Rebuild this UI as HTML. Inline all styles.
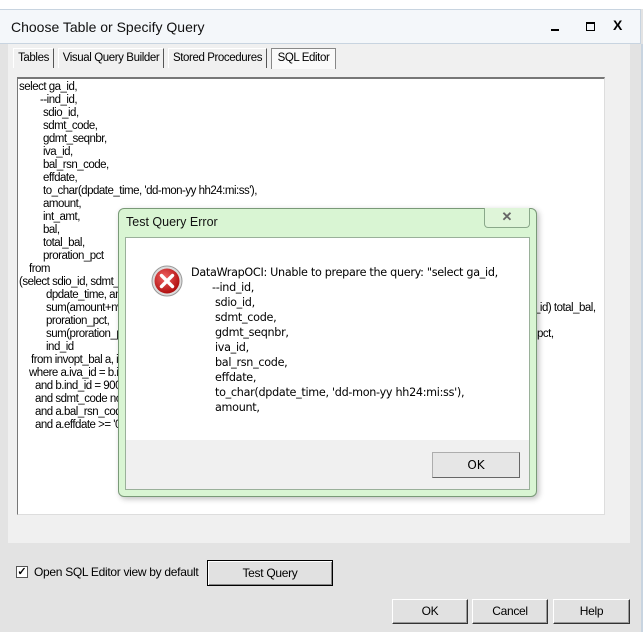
<!DOCTYPE html>
<html><head><meta charset="utf-8"><style>
*{margin:0;padding:0;box-sizing:border-box}
body{width:643px;height:632px;position:relative;background:#e3e3e3;overflow:hidden;font-family:"Liberation Sans",sans-serif}
.a{position:absolute;white-space:nowrap}
.ed{font-size:11.5px;letter-spacing:-0.5px;color:#000;line-height:13px}
.btn{position:absolute;background:#e1e1e1;border:1px solid #fff;border-right-color:#333;border-bottom-color:#333;box-shadow:inset -1px -1px 0 #999;font-size:12px;letter-spacing:-0.3px;text-align:center}
.tab{position:absolute;top:48px;height:20px;border:1px solid #fff;border-right-color:#555;border-bottom:none;background:#f0f0f0;font-size:11.5px;letter-spacing:-0.4px;line-height:18px;text-align:center}
.dt{font-family:"DejaVu Sans",sans-serif;font-size:11.2px;letter-spacing:-0.3px;line-height:15px;color:#000}
</style></head><body>
<div class="a" style="left:0;top:0;width:643px;height:9px;background:#fff"></div>
<div class="a" style="left:0;top:9px;width:641px;height:35px;background:#f4f7fa;border-top:1px solid #c8d4e0;border-bottom:1px solid #c8d4e0;border-right:1px solid #c8d4e0"></div>
<div class="a" style="left:11px;top:19px;font-size:14px;color:#111">Choose Table or Specify Query</div>
<div class="a" style="left:551px;top:29px;width:8px;height:2px;background:#000"></div>
<div class="a" style="left:586px;top:22px;width:9px;height:9px;border:1px solid #000;border-top-width:2px"></div>
<div class="a" style="left:613px;top:17px;font-size:14px;font-weight:bold">X</div>
<div class="a" style="left:641px;top:44px;width:2px;height:588px;background:#c8d4e0"></div>
<div class="a" style="left:8px;top:44px;width:622px;height:499px;background:#f0f0f0"></div>
<div class="tab" style="left:13px;width:41px">Tables</div>
<div class="tab" style="left:58px;width:106px">Visual Query Builder</div>
<div class="tab" style="left:168px;width:99px">Stored Procedures</div>
<div class="tab" style="left:271px;width:65px;background:#fafafa;border:1px solid #888;border-bottom:none;top:48px;height:21px">SQL Editor</div>
<div class="a" style="left:17px;top:77px;width:588px;height:438px;background:#fff;border-top:2px solid #777;border-left:1px solid #777;border-right:1px solid #ddd;border-bottom:1px solid #ddd"></div>
<div class="a ed" style="left:19px;top:81px">select ga_id,</div>
<div class="a ed" style="left:40px;top:94px">--ind_id,</div>
<div class="a ed" style="left:43px;top:107px">sdio_id,</div>
<div class="a ed" style="left:43px;top:120px">sdmt_code,</div>
<div class="a ed" style="left:43px;top:133px">gdmt_seqnbr,</div>
<div class="a ed" style="left:43px;top:146px">iva_id,</div>
<div class="a ed" style="left:43px;top:159px">bal_rsn_code,</div>
<div class="a ed" style="left:43px;top:172px">effdate,</div>
<div class="a ed" style="left:43px;top:185px">to_char(dpdate_time, 'dd-mon-yy hh24:mi:ss'),</div>
<div class="a ed" style="left:43px;top:198px">amount,</div>
<div class="a ed" style="left:43px;top:211px">int_amt,</div>
<div class="a ed" style="left:43px;top:224px">bal,</div>
<div class="a ed" style="left:43px;top:237px">total_bal,</div>
<div class="a ed" style="left:43px;top:250px">proration_pct</div>
<div class="a ed" style="left:29px;top:263px">from</div>
<div class="a ed" style="left:19px;top:276px">(select sdio_id, sdmt_code,</div>
<div class="a ed" style="left:46px;top:289px">dpdate_time, amount,</div>
<div class="a ed" style="left:46px;top:302px">sum(amount+nvl(int_amt,0)) over</div>
<div class="a ed" style="left:534px;top:302px">_id) total_bal,</div>
<div class="a ed" style="left:46px;top:315px">proration_pct,</div>
<div class="a ed" style="left:46px;top:328px">sum(proration_pct) over</div>
<div class="a ed" style="left:537px;top:328px">pct,</div>
<div class="a ed" style="left:46px;top:341px">ind_id</div>
<div class="a ed" style="left:31px;top:354px">from invopt_bal a, inv</div>
<div class="a ed" style="left:29px;top:367px">where a.iva_id = b.iva</div>
<div class="a ed" style="left:35px;top:380px">and b.ind_id = 9000</div>
<div class="a ed" style="left:35px;top:393px">and sdmt_code not in</div>
<div class="a ed" style="left:35px;top:406px">and a.bal_rsn_code</div>
<div class="a ed" style="left:35px;top:419px">and a.effdate &gt;= '01</div>

<!-- dialog -->
<div class="a" style="left:118px;top:208px;width:419px;height:289px;background:#d9f5d3;border:1px solid #7a9a78;border-radius:6px;box-shadow:2px 2px 6px rgba(0,0,0,.25)"></div>
<div class="a" style="left:126px;top:215px;font-family:'Liberation Sans',sans-serif;font-size:12.5px;color:#111">Test Query Error</div>
<div class="a" style="left:484px;top:208px;width:46px;height:20px;border:1px solid #8aa88a;border-top:none;border-radius:0 0 4px 4px;background:#dff5d9;text-align:center;font-size:13px;font-weight:bold;color:#666;line-height:17px">✕</div>
<div class="a" style="left:125px;top:237px;width:405px;height:253px;background:#f0f0f0;border:1px solid #9ab09a"></div>
<div class="a" style="left:126px;top:238px;width:403px;height:202px;background:#fff"></div>
<svg class="a" style="left:151px;top:265px" width="32" height="32" viewBox="0 0 32 32">
<defs><radialGradient id="g" cx="40%" cy="35%" r="65%"><stop offset="0" stop-color="#f06060"/><stop offset="1" stop-color="#b01010"/></radialGradient></defs>
<circle cx="16" cy="16" r="15" fill="#ddd" stroke="#999"/>
<circle cx="16" cy="16" r="12.5" fill="url(#g)"/>
<path d="M10.5 10.5 L21.5 21.5 M21.5 10.5 L10.5 21.5" stroke="#fff" stroke-width="3.4" stroke-linecap="round"/>
</svg>
<div class="a dt" style="left:191px;top:265px">DataWrapOCI: Unable to prepare the query: "select ga_id,</div>
<div class="a dt" style="left:212px;top:280px">--ind_id,</div>
<div class="a dt" style="left:215px;top:295px">sdio_id,</div>
<div class="a dt" style="left:215px;top:310px">sdmt_code,</div>
<div class="a dt" style="left:215px;top:325px">gdmt_seqnbr,</div>
<div class="a dt" style="left:215px;top:340px">iva_id,</div>
<div class="a dt" style="left:215px;top:355px">bal_rsn_code,</div>
<div class="a dt" style="left:215px;top:370px">effdate,</div>
<div class="a dt" style="left:215px;top:385px">to_char(dpdate_time, 'dd-mon-yy hh24:mi:ss'),</div>
<div class="a dt" style="left:215px;top:400px">amount,</div>
<div class="a" style="left:432px;top:452px;width:88px;height:26px;background:#e6e6e6;border:1px solid #adadad;border-right-color:#666;border-bottom-color:#666;font-family:'DejaVu Sans',sans-serif;font-size:12px;text-align:center;line-height:24px">OK</div>

<!-- bottom -->
<div class="a" style="left:16px;top:566px;width:12px;height:12px;background:#fff;border:1px solid #555;font-size:11px;line-height:10px;text-align:center;font-weight:bold">✓</div>
<div class="a" style="left:34px;top:565px;font-size:12px;letter-spacing:-0.3px">Open SQL Editor view by default</div>
<div class="btn" style="left:207px;top:560px;width:126px;height:26px;line-height:24px;border:1px solid #000;box-shadow:inset 1px 1px 0 #fff,inset -1px -1px 0 #888">Test Query</div>
<div class="btn" style="left:392px;top:599px;width:76px;height:25px;line-height:22px">OK</div>
<div class="btn" style="left:472px;top:599px;width:76px;height:25px;line-height:22px">Cancel</div>
<div class="btn" style="left:553px;top:599px;width:77px;height:25px;line-height:22px">Help</div>
</body></html>
